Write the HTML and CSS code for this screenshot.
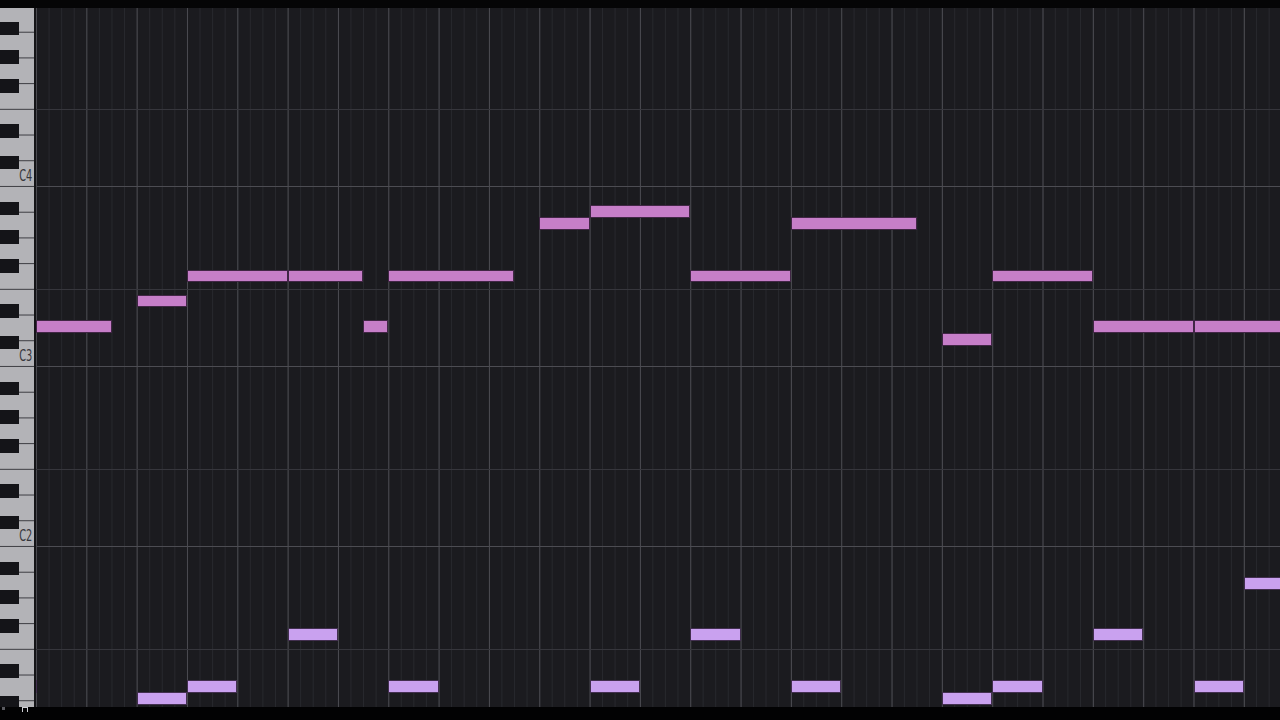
FILE: index.html
```html
<!DOCTYPE html>
<html lang="en">
<head>
<meta charset="utf-8">
<title>Piano Roll</title>
<link rel="stylesheet" href="styles.css">
</head>
<body>
<div class="app">
  <div class="topbar"></div>
  <div class="roll">
    <div class="keys">
      <div class="keys-stack">
        <div class="octave">
          <span class="bk bk-as"></span><span class="bk bk-gs"></span><span class="bk bk-fs"></span><span class="bk bk-ds"></span><span class="bk bk-cs"></span>
          <span class="label">C4</span>
        </div>
        <div class="octave">
          <span class="bk bk-as"></span><span class="bk bk-gs"></span><span class="bk bk-fs"></span><span class="bk bk-ds"></span><span class="bk bk-cs"></span>
          <span class="label">C3</span>
        </div>
        <div class="octave">
          <span class="bk bk-as"></span><span class="bk bk-gs"></span><span class="bk bk-fs"></span><span class="bk bk-ds"></span><span class="bk bk-cs"></span>
          <span class="label">C2</span>
        </div>
        <div class="octave">
          <span class="bk bk-as"></span><span class="bk bk-gs"></span><span class="bk bk-fs"></span><span class="bk bk-ds"></span><span class="bk bk-cs"></span>
        </div>
      </div>
    </div>
    <div class="grid">
      <!-- melody -->
      <div class="note lead" style="left:0px;width:75.5px;top:312px"></div>
      <div class="note lead" style="left:100.7px;width:50.3px;top:286.5px"></div>
      <div class="note lead" style="left:151px;width:100.7px;top:261.5px"></div>
      <div class="note lead" style="left:251.7px;width:75.5px;top:261.5px"></div>
      <div class="note lead" style="left:327.2px;width:25.2px;top:312px"></div>
      <div class="note lead" style="left:352.3px;width:125.8px;top:261.5px"></div>
      <div class="note lead" style="left:503.3px;width:50.3px;top:209px"></div>
      <div class="note lead" style="left:553.7px;width:100.7px;top:197px"></div>
      <div class="note lead" style="left:654.3px;width:100.7px;top:261.5px"></div>
      <div class="note lead" style="left:755px;width:125.8px;top:209px"></div>
      <div class="note lead" style="left:906px;width:50.3px;top:325px"></div>
      <div class="note lead" style="left:956.3px;width:100.7px;top:261.5px"></div>
      <div class="note lead" style="left:1057px;width:100.7px;top:312px"></div>
      <div class="note lead" style="left:1157.7px;width:100.7px;top:312px"></div>
      <!-- bass -->
      <div class="note bass" style="left:-49px;width:50.3px;top:672px"></div>
      <div class="note bass" style="left:100.7px;width:50.3px;top:684px"></div>
      <div class="note bass" style="left:151px;width:50.3px;top:672px"></div>
      <div class="note bass" style="left:251.7px;width:50.3px;top:620px"></div>
      <div class="note bass" style="left:352.3px;width:50.3px;top:672px"></div>
      <div class="note bass" style="left:553.7px;width:50.3px;top:672px"></div>
      <div class="note bass" style="left:654.3px;width:50.3px;top:620px"></div>
      <div class="note bass" style="left:755px;width:50.3px;top:672px"></div>
      <div class="note bass" style="left:906px;width:50.3px;top:684px"></div>
      <div class="note bass" style="left:956.3px;width:50.3px;top:672px"></div>
      <div class="note bass" style="left:1057px;width:50.3px;top:620px"></div>
      <div class="note bass" style="left:1157.7px;width:50.3px;top:672px"></div>
      <div class="note bass" style="left:1208px;width:50.3px;top:569px"></div>
    </div>
  </div>
  <div class="status">
    <span class="status-dot"></span>
    <span class="status-box"></span>
  </div>
</div>
</body>
</html>
```
FILE: styles.css
```css
* {
  box-sizing: border-box;
}

html,
body {
  margin: 0;
  padding: 0;
  background: #000;
}

body {
  font-family: "Liberation Sans Narrow", "DejaVu Sans Condensed", "Liberation Sans", sans-serif;
}

.app {
  width: 1280px;
  height: 720px;
  display: flex;
  flex-direction: column;
  overflow: hidden;
  background: #000;
}

.topbar {
  height: 8px;
  flex: none;
  background: #050506;
}

.roll {
  height: 699px;
  flex: none;
  display: flex;
}

/* keyboard column */
.keys {
  width: 36px;
  flex: none;
  overflow: hidden;
  border-right: 2px solid #141417;
  background: #b3b3b7;
}

.keys-stack {
  margin-top: -1.5px;
  display: flex;
  flex-direction: column;
}

.octave {
  position: relative;
  height: 180px;
  flex: none;
  background-image: linear-gradient(to bottom, transparent calc(100% - 1px), #3b3b40 calc(100% - 1px));
  background-size: 100% 25.714px;
  background-color: #b3b3b7;
}

.bk {
  position: absolute;
  left: 0;
  width: 19px;
  height: 13.6px;
  background: #141418;
}

.bk-as { top: 15.2px; }
.bk-gs { top: 43.7px; }
.bk-fs { top: 72.5px; }
.bk-ds { top: 117.5px; }
.bk-cs { top: 149.2px; }

.label {
  position: absolute;
  right: 2px;
  bottom: 3px;
  font-size: 16px;
  line-height: 16px;
  color: #36363c;
  transform: scaleX(0.68);
  transform-origin: right bottom;
}

/* note grid */
.grid {
  position: relative;
  flex: 1;
  overflow: hidden;
  background-color: #1b1b1f;
  background-image:
    linear-gradient(to bottom, transparent 178px, #4c4c52 178px, #4c4c52 179.4px, transparent 179.4px),
    linear-gradient(to bottom, transparent 100.6px, #36363c 100.6px, #36363c 101.8px, transparent 101.8px),
    linear-gradient(to right, #4a4a50 1px, transparent 1px),
    linear-gradient(to right, #27282d 1px, transparent 1px);
  background-size:
    100% 180px,
    100% 180px,
    50.333px 100%,
    12.583px 100%;
  background-position:
    0 0,
    0 0,
    0 0,
    0 0;
}

.note {
  position: absolute;
  height: 12.7px;
  border: 1px solid rgba(20, 10, 25, 0.75);
}

.lead {
  background: #c67ec8;
}

.bass {
  background: #c9a1ef;
}

.status {
  flex: 1;
  display: flex;
  align-items: flex-start;
  gap: 17px;
  padding-left: 2px;
  background: #020203;
}

.status-dot {
  width: 3px;
  height: 3px;
  background: #5a5a60;
}

.status-box {
  width: 6px;
  height: 5px;
  border: 1px solid #cfcfd4;
  border-bottom: none;
}
```
